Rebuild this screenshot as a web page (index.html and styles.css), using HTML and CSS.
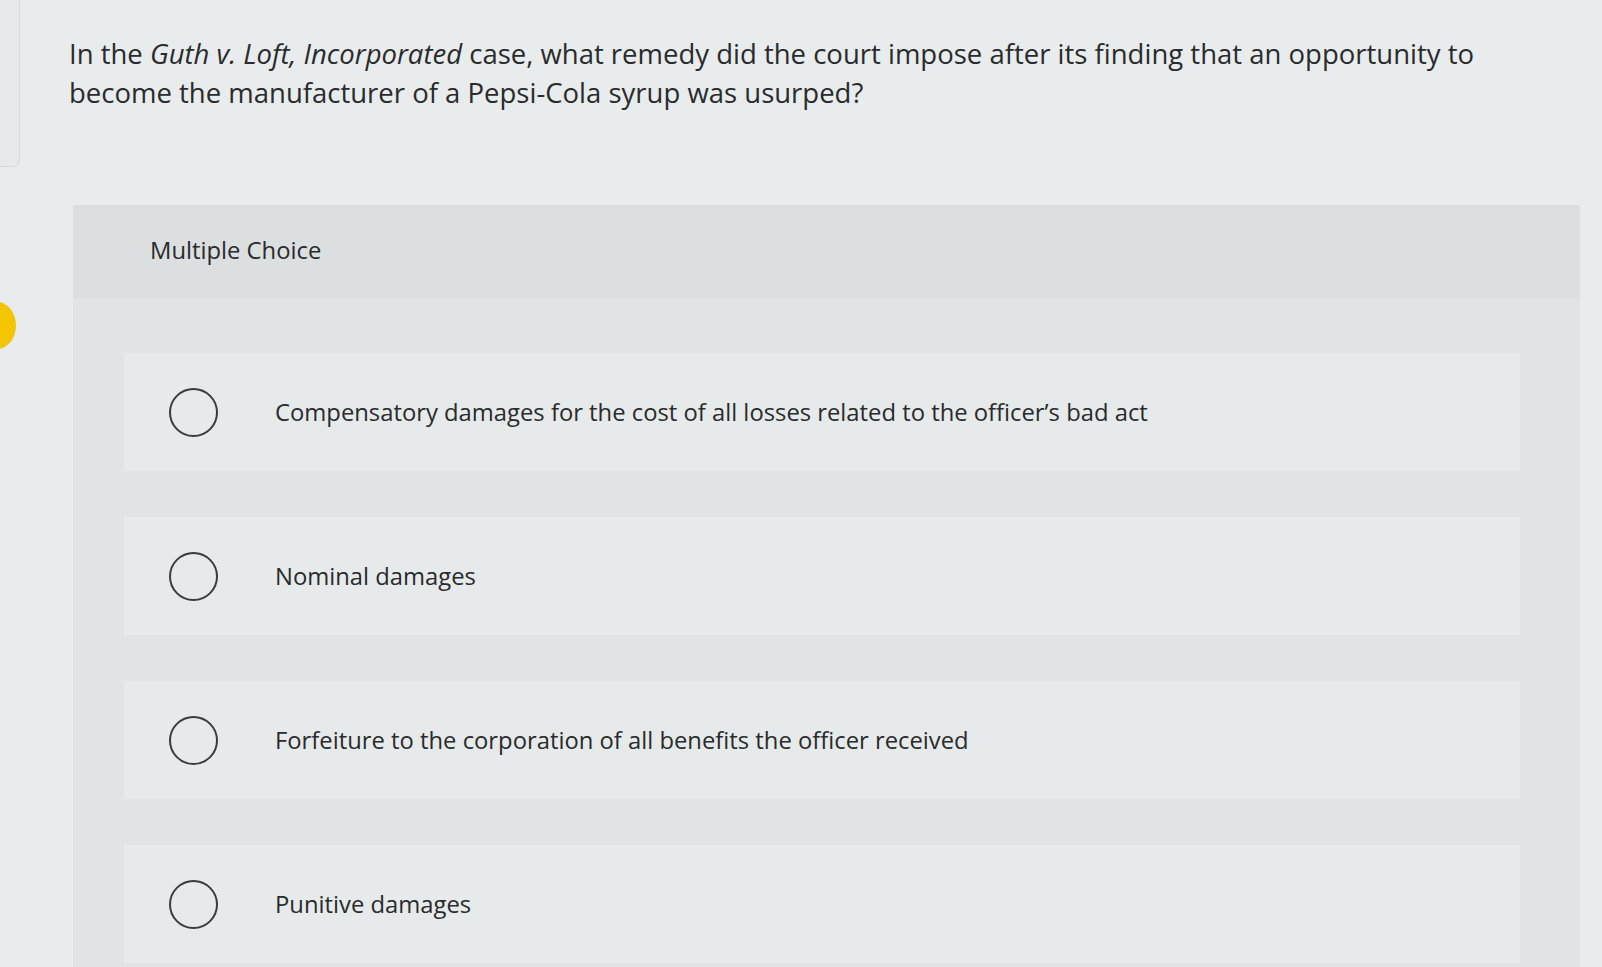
FILE: index.html
```html
<!DOCTYPE html>
<html>
<head>
<meta charset="utf-8">
<link rel="stylesheet" href="styles.css">
</head>
<body>
<div class="side-card"></div>
<div class="dot"></div>
<main class="page">
  <p class="question">In the <em>Guth v. Loft, Incorporated</em> case, what remedy did the court impose after its finding that an opportunity to become the manufacturer of a Pepsi-Cola syrup was usurped?</p>
  <section class="panel">
    <div class="panel-head">Multiple Choice</div>
    <div class="options">
      <div class="option"><span class="radio"></span><span class="label">Compensatory damages for the cost of all losses related to the officer’s bad act</span></div>
      <div class="option"><span class="radio"></span><span class="label">Nominal damages</span></div>
      <div class="option"><span class="radio"></span><span class="label">Forfeiture to the corporation of all benefits the officer received</span></div>
      <div class="option"><span class="radio"></span><span class="label">Punitive damages</span></div>
    </div>
  </section>
</main>
</body>
</html>
```
FILE: styles.css
```css
html, body {
  margin: 0;
  padding: 0;
  height: 100%;
  overflow: hidden;
}
body {
  background: #e9ecec;
  font-family: "Open Sans", Lato, sans-serif;
  color: #2a2b2c;
  position: relative;
}
.side-card {
  position: absolute;
  left: -10px;
  top: -10px;
  width: 28px;
  height: 175px;
  border: 1px solid #d6d9d9;
  border-radius: 6px;
  background: #e6e9e9;
}
.dot {
  position: absolute;
  left: -22px;
  top: 302px;
  width: 38px;
  height: 47px;
  border-radius: 50%;
  background: #f2c500;
}
.page {
  padding: 34px 0 0 69px;
}
.question {
  margin: 0;
  width: 1440px;
  font-size: 27.5px;
  line-height: 39px;
}
.question em {
  font-style: italic;
}
.panel {
  margin-top: 93px;
  margin-left: 4px;
  width: 1507px;
  background: #e1e4e4;
  border-radius: 3px 3px 0 0;
  height: 800px;
}
.panel-head {
  background: #dcdfe0;
  height: 93px;
  padding-left: 77px;
  display: flex;
  align-items: center;
  font-size: 23.8px;
  box-sizing: border-box;
  padding-bottom: 4px;
}
.options {
  padding: 55px 60px 0 51px;
  display: flex;
  flex-direction: column;
  gap: 46px;
}
.option {
  background: #e7eaea;
  height: 118px;
  display: flex;
  align-items: center;
  padding-left: 45px;
}
.radio {
  width: 49px;
  height: 49px;
  border: 2px solid #3a3c40;
  border-radius: 50%;
  box-sizing: border-box;
  flex: none;
}
.label {
  margin-left: 57px;
  font-size: 23.8px;
}
```
